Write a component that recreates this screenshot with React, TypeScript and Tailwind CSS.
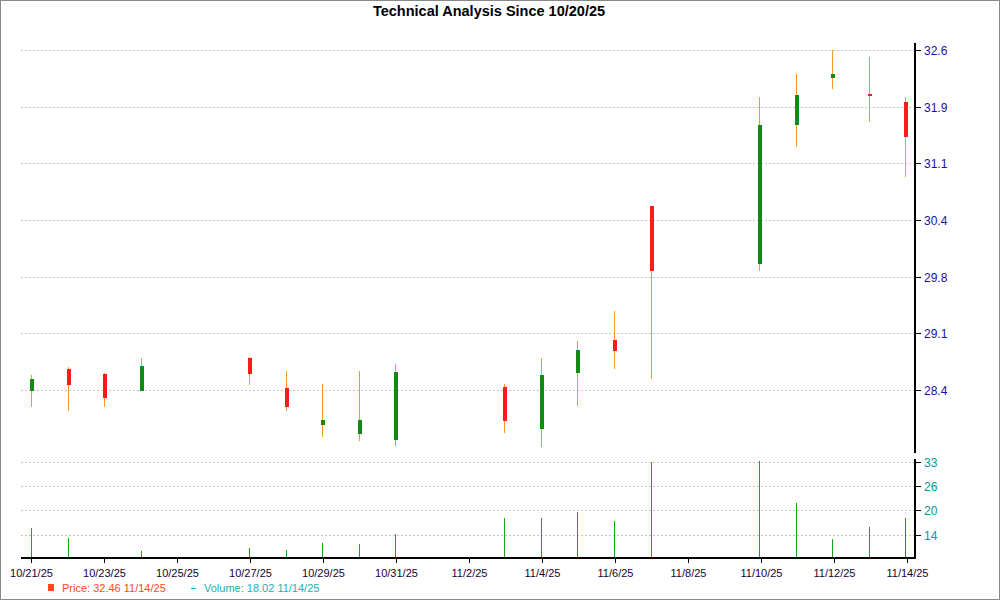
const candles: [number, number, number, number, number, boolean][] = [
  // x, wickTop, wickBottom, bodyTop, bodyBottom, up
  [30, 374, 406, 378, 390, true],
  [67, 366, 410, 368, 384, false],
  [103, 372, 406, 373, 397, false],
  [140, 357, 390, 365, 390, true],
  [248, 356, 384, 357, 373, false],
  [285, 370, 410, 387, 406, false],
  [321, 383, 436, 419, 424, true],
  [358, 370, 440, 419, 433, true],
  [394, 363, 445, 371, 439, true],
  [503, 383, 432, 386, 420, false],
  [540, 357, 446, 374, 428, true],
  [576, 340, 405, 349, 372, true],
  [613, 310, 368, 339, 350, false],
  [650, 205, 378, 205, 270, false],
  [758, 96, 270, 124, 263, true],
  [795, 73, 146, 94, 124, true],
  [831, 49, 88, 73, 77, true],
  [868, 56, 121, 93, 95, false],
  [904, 96, 176, 101, 136, false],
];

const volumes: [number, number][] = [
  [30, 527], [67, 537], [140, 550], [248, 547], [285, 549], [321, 542], [358, 543],
  [394, 533], [503, 517], [540, 517], [576, 511], [613, 520], [650, 461], [758, 460],
  [795, 502], [831, 538], [868, 526],
];

const priceGrid: [number, string][] = [
  [49, "32.6"], [106, "31.9"], [162, "31.1"], [219, "30.4"], [276, "29.8"], [332, "29.1"], [389, "28.4"],
];
const volGrid: [number, string][] = [[461, "33"], [485, "26"], [509, "20"], [534, "14"]];
const dates = ["10/21/25", "10/23/25", "10/25/25", "10/27/25", "10/29/25", "10/31/25", "11/2/25", "11/4/25", "11/6/25", "11/8/25", "11/10/25", "11/12/25", "11/14/25"];

export default function App() {
  return (
    <div className="w-[1000px] h-[600px] bg-white border border-[#888] relative" style={{ fontFamily: '"Liberation Sans", Arial, sans-serif' }}>
      <svg width="998" height="598" className="absolute left-0 top-0" shapeRendering="crispEdges">
        <text x="488" y="15" textAnchor="middle" fontSize="14.5" fontWeight="bold" fill="#000">
          Technical Analysis Since 10/20/25
        </text>
        {priceGrid.map(([y, l]) => (
          <g key={l}>
            <line x1="20" x2="913" y1={y + 0.5} y2={y + 0.5} stroke="#c4c4c4" strokeDasharray="2 2" />
            <line x1="914" x2="920" y1={y + 0.5} y2={y + 0.5} stroke="#000" />
            <text x="923" y={y + 5} fontSize="12" fill="#1a0dab">{l}</text>
          </g>
        ))}
        {volGrid.map(([y, l]) => (
          <g key={l}>
            <line x1="20" x2="913" y1={y + 0.5} y2={y + 0.5} stroke="#c4c4c4" strokeDasharray="2 2" />
            <line x1="914" x2="920" y1={y + 0.5} y2={y + 0.5} stroke="#000" />
            <text x="923" y={y + 5} fontSize="12" fill="#009999">{l}</text>
          </g>
        ))}
        <line x1="914" x2="914" y1="42" y2="452" stroke="#000" strokeWidth="2" />
        <line x1="914" x2="914" y1="458" y2="558" stroke="#000" strokeWidth="2" />
        <line x1="20" x2="915" y1="557" y2="557" stroke="#000" strokeWidth="2" />
        {dates.map((d, i) => {
          const x = Math.round(30 + i * 73.0) + 0.5;
          return (
            <g key={d}>
              <line x1={x} x2={x} y1="557" y2="562" stroke="#000" />
              <text x={x} y="576" textAnchor="middle" fontSize="11" fill="#1a0033">{d}</text>
            </g>
          );
        })}
        {volumes.map(([x, y]) => (
          <line key={x} x1={x + 0.5} x2={x + 0.5} y1={y} y2="556" stroke="#1aa51a" />
        ))}
        <line x1="904.5" x2="904.5" y1="517" y2="556" stroke="#ff2020" />
        {candles.map(([x, wt, wb, bt, bb, up]) => (
          <g key={x}>
            <line x1={x + 0.5} x2={x + 0.5} y1={wt} y2={wb} stroke="#f39a2a" />
            <rect x={x - 1.5} y={bt} width="4" height={Math.max(bb - bt, 2)} fill={up ? "#138a13" : "#ff1a1a"} />
          </g>
        ))}
        <rect x="47" y="583" width="6" height="7" fill="#ff4a1a" />
        <text x="61" y="591" fontSize="11" fill="#ff4a1a">Price: 32.46  11/14/25</text>
        <line x1="190" x2="195" y1="587.5" y2="587.5" stroke="#20b2aa" />
        <text x="203" y="591" fontSize="11" fill="#20b2aa">Volume: 18.02  11/14/25</text>
      </svg>
    </div>
  );
}
